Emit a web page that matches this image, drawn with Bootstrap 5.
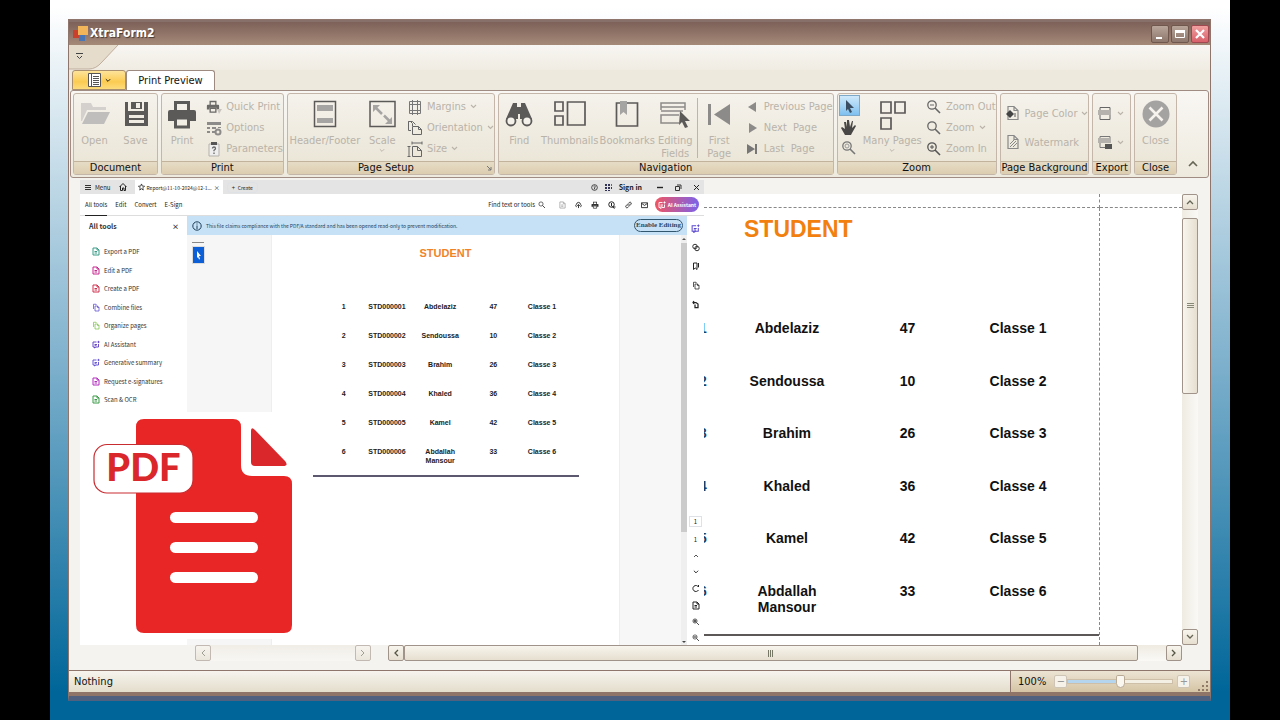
<!DOCTYPE html>
<html lang="en">
<head>
<meta charset="utf-8">
<meta name="viewport" content="width=device-width, initial-scale=1">
<title>XtraForm2</title>
<link href="https://cdn.jsdelivr.net/npm/bootstrap@5.3.0/dist/css/bootstrap.min.css" rel="stylesheet">
<style>
body{background:#000;font-family:"DejaVu Sans Condensed","DejaVu Sans",sans-serif;font-size:11px;line-height:13px;color:#111}
button{font:inherit;color:inherit;background:none;border:0;padding:0}
svg{display:block;flex:none}
a{color:inherit;text-decoration:none}
.desk{margin:0 50px;padding:19px 19px 19px 18px;background:linear-gradient(#fff 0,#fff 1%,#7fb1cd 50%,#069 96%)}
.win{border:1px solid #8e766d;border-bottom:5px solid #50607f;background:#f5f3f0}
.titlebar{height:25px;background:linear-gradient(#7d6259,#8d7065 40%,#a58a78);border-top:2px solid #88706a;color:#fff;font-size:12px;text-shadow:1px 1px 1px #4a3a34;padding:0 1px 0 3px}
.cap{width:18px;height:18px;border:1px solid #6f574e;border-radius:2px;background:linear-gradient(#b9a59a,#8d766b)}
.cap-close{background:linear-gradient(#f0a0a0,#d8606a);border-color:#a04850}
.quick{height:25px;background:linear-gradient(#f8f6f3,#f0ece2)}
.tabs-row{height:20px;background:#edeadd;padding:0 3px}
.app-tab{width:54px;border:1px solid #a98f6d;border-radius:3px 3px 0 0;background:linear-gradient(#fde49a,#fbcb52 60%,#fddc7c)}
.page-tab{width:89px;border:1px solid #9d8a80;border-bottom:0;border-radius:3px 3px 0 0;background:#fff}
.ribbon{border:1px solid #a08c82;border-radius:3px;margin:0 1px;padding:2px;background:linear-gradient(#f9f7f4,#eeeade);gap:3px}
.grp{border:1px solid #c4b6a8;border-radius:3px;background:linear-gradient(#f5f2ec,#e9e4d4)}
.grp-body{height:67px}
.grp-cap{height:12px;line-height:12px;background:linear-gradient(#e6dcc6,#dccdb0);border-top:1px solid #c2b39c;text-align:center;box-sizing:content-box;white-space:nowrap}
.big{padding-top:4px;color:#b9b3aa;text-align:center;line-height:13px;white-space:nowrap;display:flex;flex-direction:column;align-items:center}
.big svg.ic{width:32px;height:32px;margin-bottom:4px}
.stack{padding:2px 0 0 4px}
.tools{padding:1px 3px 0 1px}
.small-row{height:21px;display:flex;align-items:center;gap:4px;color:#b9b3aa;white-space:nowrap}
.small-row svg.ic{width:16px;height:16px}
.w41{width:41px}.w55{width:55px}.w60{width:60px}.w74{width:74px}
.g1{width:86px}.g2{width:123px}.g3{width:209px}.g4{width:336px}.g5{width:160px}.g6{width:91px}.g7{width:39px}.g8{width:43px}
.sepline{width:1px;height:60px;background:#c0b4a6;margin:4px 1px 0 1px}
.tool-on{width:21px;height:21px;background:linear-gradient(#cfe9fb,#7fc0ef);border:1px solid #7fa9c8}
.work{padding:16px 12px 0 11px}
.viewer{flex:624 1 0;min-width:0;margin-top:-14px;background:#fff;font-family:"Noto Sans CJK SC","Liberation Sans",sans-serif;font-size:6px;line-height:9px;color:#222;position:relative}
.tiny{font-size:5px}
.v-tabs{height:14px;background:#e4e4e4}
.v-tab{background:#fff;height:14px;padding:0 3px;gap:2px}
.v-bar{height:22px;padding:0 5px;border-bottom:1px solid #ddd}
.v-active{border-bottom:1px solid #222;line-height:20px;margin-top:1px}
.v-side{width:107px;padding:0 0 0 12px;color:#333}
.v-head{padding:6px 8px 11px 0;font-size:7px;margin-left:-3px}
.v-side li{height:19px;display:flex;align-items:center;gap:4px}
.v-side li:nth-child(even){height:18px}
.banner{height:19px;background:#c6e1f6;color:#1c3d57;padding:0 4px 0 5px}
.pill{border:1px solid #33566f;border-radius:8px;height:13px;width:49px;font-family:"Liberation Serif",serif;font-size:7px;font-weight:700;color:#2b4a63}
.ai{background:linear-gradient(90deg,#ef5562,#7b62ea);color:#fff;border-radius:8px;width:44px;height:15px;font-weight:700;font-size:5px;gap:2px}
.canvas-l{width:85px;background:#f6f6f6;border-right:1px solid #eee}
.canvas-r{width:62px;background:#f7f7f7;border-left:1px solid #eee}
.v-scroll{width:6px;background:#efefef}
.v-thumb{height:289px;background:#cbcbcb}
.rail{width:17px;padding:8px 0 3px}
.fixed-table{table-layout:fixed;width:100%;border-collapse:collapse;text-align:center;font-weight:700}
.fixed-table td{padding:0;vertical-align:top}
.mini{margin:42px auto 0;width:266px;border-bottom:2px solid #5c5870;font-family:"Liberation Sans",sans-serif;font-size:7px}
.mini td{white-space:nowrap}
.mini td:first-child{padding-left:9px}
.mini td:last-child{padding-right:9px}
.mini tr{height:29px}
.mini-title{font-family:"Liberation Sans",sans-serif;font-size:11px;line-height:14px;color:#f0832a;font-weight:700;margin-top:11px}
.logo-art{position:absolute;left:0;top:232px;background:#fff;width:222px}
.logo-word{font-family:Lato,"Liberation Sans",sans-serif;font-weight:900}
.preview{flex:478 1 0;min-width:0;background:#fff;overflow:hidden;font-family:"Liberation Sans",sans-serif;font-size:14px;line-height:16px;color:#111}
.strip{height:14px}
.dash-b{border-bottom:1px dashed #888}
.dash-r{border-right:1px dashed #888}
.margin-col{flex:none;width:82px}
.big-title{font-size:23px;line-height:25px;color:#f2800f;padding:9px 0 0 40px}
.report{margin-top:78px;border-bottom:2px solid #5c5858}
.report tr{height:53px}
.report tr:nth-child(even){height:52px}
.report td:first-child{color:#1d3d66;text-indent:-5px;text-align:left}
.vbar{width:16px;background:linear-gradient(90deg,#efebe2,#faf9f6)}
.sb{width:16px;height:16px;border:1px solid #a0948a;border-radius:2px;background:linear-gradient(#f8f5ee,#e6dfd0);display:flex;align-items:center;justify-content:center}
.vthumb{height:176px;border:1px solid #a0948a;border-radius:2px;background:linear-gradient(90deg,#f8f5ee,#e6dfd0)}
.hthumb{height:16px;border:1px solid #a0948a;border-radius:2px;background:linear-gradient(#f8f5ee,#e6dfd0)}
.htrack{background:linear-gradient(#efebe2,#faf9f6)}
.hs-off{width:176px;margin-left:126px;opacity:.6}
.hs-on{margin:0 28px 0 17px}
.hs-end{margin-left:28px}
.status{height:22px;margin-top:9px;border-top:1px solid #8e766d;background:linear-gradient(#f6f4ee,#e3ddcb);padding-left:5px}
.status-r{width:200px;border-left:1px solid #8e766d;background:linear-gradient(#ece4d4,#d5c4a4);padding-left:7px}
.frame-b{height:4px;background:#8f7468}
.zb{width:13px;height:13px;border:1px solid #cfc5b6;border-radius:2px;background:#f6f2ea;color:#999;line-height:10px}
.zoomer{appearance:none;-webkit-appearance:none;width:106px;height:15px;background:none;margin:0}
.zoomer::-webkit-slider-runnable-track{height:5px;border:1px solid #cdbfa8;background:linear-gradient(90deg,#b5d4ee 50%,#f4efe5 50%)}
.zoomer::-webkit-slider-thumb{-webkit-appearance:none;width:9px;height:13px;margin-top:-5px;background:#faf7f0;border:1px solid #b9aa95;border-radius:2px 2px 5px 5px}
</style>
</head>
<body>
<svg width="0" height="0" class="position-absolute">
<defs>
<symbol id="chev" viewBox="0 0 7 5"><path d="M1 1l2.5 2.5L6 1" fill="none" stroke="currentColor" stroke-width="1.1"/></symbol>
<symbol id="lens" viewBox="0 0 16 16"><circle cx="6" cy="6" r="4.2" fill="none" stroke="currentColor" stroke-width="1.3"/><path d="M9 9l5 5" stroke="currentColor" stroke-width="1.6"/></symbol>
<symbol id="printer" viewBox="0 0 32 32"><path d="M8 3h16v9h-3V6H11v6H8zM4 12h24q2 0 2 2v9h-6v-4H8v4H2v-9q0-2 2-2z" fill="currentColor"/><path d="M9.500 20h13v9h-13z" fill="none" stroke="currentColor" stroke-width="3"/></symbol>
<symbol id="doc" viewBox="0 0 16 16"><path d="M3 1.500h6l4 4v9H3zM9 1.500v4h4" fill="none" stroke="currentColor" stroke-width="1.2"/></symbol>
<symbol id="copy" viewBox="0 0 16 16"><path d="M6 5h5l3 3v7H6zM3 11V1.500h5l2 2M11 5v3h3" fill="none" stroke="currentColor" stroke-width="1.500"/></symbol>
<symbol id="tool" viewBox="0 0 16 16"><path d="M2 15V1h8l4 4v10zM10 1v4h4M5 8h5M5 11h5" fill="none" stroke="currentColor" stroke-width="2"/></symbol>
<symbol id="box" viewBox="0 0 16 16"><path d="M9 3H2v10h3v2l3-2h5V7M5 8h5M5 10.500h4" fill="none" stroke="currentColor" stroke-width="1.800"/><path d="M13 0l1 2 2 1-2 1-1 2-1-2-2-1 2-1z" fill="currentColor"/></symbol>
</defs>
</svg>
<div class="desk min-vh-100 d-flex flex-column">
<main class="win d-flex flex-column flex-grow-1">

<header class="titlebar d-flex align-items-center">
  <svg width="18" height="17" viewBox="0 0 18 17"><path d="M1 5h7v8H1z" fill="#c9402c"/><path d="M6 1h10v9H6z" fill="#f2b55a"/><path d="M7 10h6v6H7z" fill="#4a76b5"/></svg>
  <b class="flex-grow-1">XtraForm2</b>
  <div class="d-flex" style="gap:2px">
    <button class="cap" aria-label="Minimize"><svg width="16" height="16"><path d="M4 11h6v2H4z" fill="#fff"/></svg></button>
    <button class="cap" aria-label="Maximize"><svg width="16" height="16"><path d="M3.500 4.500h9v7h-9z" fill="none" stroke="#fff"/><path d="M3 4h10v3H3z" fill="#fff"/></svg></button>
    <button class="cap cap-close" aria-label="Close window"><svg width="16" height="16"><path d="M4 4l8 8M12 4l-8 8" stroke="#fff" stroke-width="2.200"/></svg></button>
  </div>
</header>

<div class="quick"><button aria-label="Customize toolbar"><svg width="52" height="25"><path d="M0 0h49L33 17Q27 24 20 24H0z" fill="#e6dccb"/><path d="M49 0L33 17Q27 24 20 24H0" fill="none" stroke="#bfae9e"/><path d="M7 8.500h7M8 11l2.500 2.500L13 11" fill="none" stroke="#444"/></svg></button></div>

<nav class="tabs-row d-flex">
  <button class="app-tab d-flex align-items-center justify-content-center gap-1" aria-label="File menu"><svg width="13" height="14"><path d="M.500.500h12v13H.500zM3.500 1v12" fill="#fff" stroke="#555"/><path d="M5 3.500h6M5 5.500h6M5 7.500h6M5 9.500h6M5 11.500h6" stroke="#555"/></svg><svg width="6" height="5"><use href="#chev"/></svg></button>
  <button class="page-tab">Print Preview</button>
</nav>

<section class="ribbon d-flex">
  <div class="grp g1"><div class="grp-body d-flex">
    <button class="big w41"><svg class="ic" viewBox="0 0 32 32"><path d="M2 5h10l2 4h13v3H8L3 23H2z" fill="#d3d0cd"/><path d="M9 14h22l-6 12H3z" fill="#c0bebd"/></svg>Open</button>
    <button class="big w41"><svg class="ic" viewBox="0 0 32 32"><path d="M5 4h3v9h16V4h4v24H5z" fill="#5c5a59"/><path d="M11 4h11v7H11z" fill="#5c5a59"/><path d="M16 5h4v5h-4z" fill="#f2efe8"/><path d="M9 17h15v3H9zM9 22h15v3H9z" fill="#f0ece4"/></svg>Save</button>
  </div><div class="grp-cap">Document</div></div>

  <div class="grp g2"><div class="grp-body d-flex">
    <button class="big w41"><svg class="ic" style="color:#5c5a59"><use href="#printer"/></svg>Print</button>
    <div class="stack">
      <button class="small-row"><svg class="ic" viewBox="0 0 16 16" style="color:#6b6967"><use href="#printer" width="14" height="15"/><path d="M11 10h5l-3 5z" fill="#c9c5be"/></svg>Quick Print</button>
      <button class="small-row"><svg class="ic" viewBox="0 0 16 16"><path d="M1 2h14v3H1zM1 7h3v2H1zM6 7h4v2H6zM1 11h3v2H1zM6 11h3v2H6zM12 7h3v1h-3z" fill="#8d8b89"/><circle cx="12" cy="12" r="2.500" fill="none" stroke="#8d8b89" stroke-width="2"/></svg>Options</button>
      <button class="small-row"><svg class="ic" viewBox="0 0 16 16"><path d="M3 3h10v12H3z" fill="#eee" stroke="#b5b1ac"/><path d="M5 1h6v3H5z" fill="#555"/><path d="M6.500 7.500q0-1.500 1.500-1.500t1.500 1.500q0 1-1.500 1.800v1M8 11.500v1.500" fill="none" stroke="#666" stroke-width="1.300"/></svg>Parameters</button>
    </div>
  </div><div class="grp-cap">Print</div></div>

  <div class="grp g3"><div class="grp-body d-flex">
    <button class="big w74"><svg class="ic" viewBox="0 0 32 32"><path d="M5.500 3.500h21v25h-21z" fill="none" stroke="#5c5a59" stroke-width="1.500"/><path d="M8 7h16v6H8zM8 20h16v5H8z" fill="#a6a4a2"/></svg>Header/Footer</button>
    <button class="big w41"><svg class="ic" viewBox="0 0 32 32"><path d="M4 3.500h25v25H4z" fill="none" stroke="#5c5a59" stroke-width="1.500"/><path d="M7 7h7l-7 7zM26 26h-7l7-7z" fill="#a6a4a2"/><path d="M9 9l7 7M18 17.500l6 6" stroke="#a6a4a2" stroke-width="2.500"/></svg>Scale<svg width="6" height="7" viewBox="0 0 7 5"><use href="#chev"/></svg></button>
    <div class="stack">
      <button class="small-row"><svg class="ic" viewBox="0 0 16 16"><path d="M2.500 2.500h11v12h-11zM5.500 1v15M10.500 1v15M2 5.500h12M2 11.500h12" fill="none" stroke="#777"/></svg>Margins<svg width="7" height="5"><use href="#chev"/></svg></button>
      <button class="small-row"><svg class="ic" viewBox="0 0 16 16"><path d="M5.500 6V3.500L3.500 1.500h-2v9H4M1.500 1.500h4l3 3M5.500 6.500h6l3 3v5h-9zM11.500 6.500v3h3" fill="none" stroke="#666"/></svg>Orientation<svg width="7" height="5"><use href="#chev"/></svg></button>
      <button class="small-row"><svg class="ic" viewBox="0 0 16 16"><path d="M5.500 5.500h5l4 4v6h-9zM10.500 5.500v4h4M5 2h10M5 .5v3M15 .5v3M2 5v11M.5 5.500h3M.5 15.500h3" fill="none" stroke="#666"/></svg>Size<svg width="7" height="5"><use href="#chev"/></svg></button>
    </div>
  </div><div class="grp-cap d-flex"><span class="flex-grow-1">Page Setup</span><svg width="10" height="12"><path d="M3 4l4 4M7 5v3H4" fill="none" stroke="#777"/></svg></div></div>

  <div class="grp g4"><div class="grp-body d-flex">
    <button class="big w41"><svg class="ic" viewBox="0 0 32 32"><path d="M10 5h4v4h4V5h4l7 16H17v-5h-2v5H3z" fill="#5c5a59"/><circle cx="8" cy="23" r="4.500" fill="#f4f1ea" stroke="#5c5a59" stroke-width="1.800"/><circle cx="24" cy="23" r="4.500" fill="#f4f1ea" stroke="#5c5a59" stroke-width="1.800"/></svg>Find</button>
    <button class="big w60"><svg class="ic" viewBox="0 0 32 32"><path d="M1 4h8v9H1zM1 18h8v9H1zM13.500 4H31v23H13.500z" fill="none" stroke="#5c5a59" stroke-width="1.700"/></svg>Thumbnails</button>
    <button class="big w55"><svg class="ic" viewBox="0 0 32 32"><path d="M5.500 5h21v23h-21z" fill="none" stroke="#5c5a59" stroke-width="1.700"/><path d="M9 3h7v14l-3.500-3L9 17z" fill="#a6a4a2"/></svg>Bookmarks</button>
    <button class="big w41"><svg class="ic" viewBox="0 0 32 32"><path d="M2 12V5h24v7M2 9h24M20 17H2v8h18M2 13h22" fill="none" stroke="#8d8b89" stroke-width="1.500"/><path d="M21 13l10 10h-5l3 6-3 1-3-6-3 3z" fill="#5c5a59"/></svg>Editing<br>Fields</button>
    <div class="sepline"></div>
    <button class="big w41"><svg class="ic" viewBox="0 0 32 32"><path d="M5 6h3v21H5zM27 6v21L11 16.500z" fill="#8d8b89"/></svg>First<br>Page</button>
    <div class="stack">
      <button class="small-row"><svg class="ic" viewBox="0 0 16 16"><path d="M12 3v10L4 8z" fill="#8d8b89"/></svg>Previous Page</button>
      <button class="small-row"><svg class="ic" viewBox="0 0 16 16"><path d="M5 3v10l8-5z" fill="#8d8b89"/></svg>Next&nbsp; Page</button>
      <button class="small-row"><svg class="ic" viewBox="0 0 16 16"><path d="M3 3v10l8-5zM11 3h2v10h-2z" fill="#777"/></svg>Last&nbsp; Page</button>
    </div>
  </div><div class="grp-cap">Navigation</div></div>

  <div class="grp g5"><div class="grp-body d-flex">
    <div class="tools">
      <button class="tool-on d-flex align-items-center justify-content-center" aria-label="Pointer"><svg width="16" height="16"><path d="M5 2l8 8H9l2 4-2 1-2-4-2 2z" fill="#3b4d60"/></svg></button>
      <button class="small-row" aria-label="Hand tool"><svg width="20" height="16" viewBox="0 0 20 16"><path d="M6 16L2 9l1-1 3 2-1-7h2l1 5V1h2l1 7 2-6h1l-1 7 3-3 1 1-4 7-1 2z" fill="#4a4846"/></svg></button>
      <button class="small-row" aria-label="Magnifier"><svg width="20" height="16" viewBox="-2 0 20 16" style="color:#777"><use href="#lens" width="16" height="16"/><circle cx="6" cy="6" r="2" fill="none" stroke="#999"/></svg></button>
    </div>
    <button class="big w60"><svg class="ic" viewBox="0 0 32 32"><path d="M5 4h10v11H5zM19 4h10v11H19zM5 20h10v11H5z" fill="none" stroke="#5c5a59" stroke-width="1.700"/></svg>Many Pages<svg width="6" height="7" viewBox="0 0 7 5"><use href="#chev"/></svg></button>
    <div class="stack">
      <button class="small-row"><svg class="ic" viewBox="0 0 16 16" style="color:#666"><use href="#lens"/><path d="M4 6h4" stroke="#666"/></svg>Zoom Out</button>
      <button class="small-row"><svg class="ic" style="color:#666"><use href="#lens"/></svg>Zoom<svg width="7" height="5"><use href="#chev"/></svg></button>
      <button class="small-row"><svg class="ic" viewBox="0 0 16 16" style="color:#555"><use href="#lens"/><path d="M4 6h4M6 4v4" stroke="#555"/></svg>Zoom In</button>
    </div>
  </div><div class="grp-cap">Zoom</div></div>

  <div class="grp g6"><div class="grp-body d-flex flex-column justify-content-center ps-1" style="gap:8px">
    <button class="small-row"><svg class="ic" viewBox="0 0 16 16" style="color:#888"><use href="#doc"/><path d="M5 5l4 4-4 4-4-4z" fill="#444"/><path d="M10 8v4" stroke="#555"/></svg>Page Color<svg width="7" height="5"><use href="#chev"/></svg></button>
    <button class="small-row"><svg class="ic" viewBox="0 0 16 16" style="color:#888"><use href="#doc"/><path d="M5 10l4-4M5 13l6-6M8 13l4-4" stroke="#888"/></svg>Watermark</button>
  </div><div class="grp-cap">Page Background</div></div>

  <div class="grp g7"><div class="grp-body d-flex flex-column justify-content-center ps-1" style="gap:8px">
    <button class="small-row" aria-label="Export to"><svg class="ic" viewBox="0 0 16 16"><path d="M3 6V2.500h10V6M3 9v5.500h10V9" fill="none" stroke="#666"/><path d="M1 5h13v5H1z" fill="#b5b2ae"/></svg><svg width="7" height="5"><use href="#chev"/></svg></button>
    <button class="small-row" aria-label="Send by e-mail"><svg class="ic" viewBox="0 0 16 16"><path d="M3 5V2.500h10V5M3 9v4.500h5" fill="none" stroke="#777"/><path d="M1 4h13v5H1z" fill="#b5b2ae"/><path d="M8 10h7v5H8z" fill="#555"/></svg><svg width="7" height="5"><use href="#chev"/></svg></button>
  </div><div class="grp-cap">Export</div></div>

  <div class="grp g8"><div class="grp-body d-flex">
    <button class="big w41"><svg class="ic" viewBox="0 0 32 32"><circle cx="16" cy="16" r="13.500" fill="#a5a3a2"/><path d="M9.500 9.500l13 13M22.500 9.500l-13 13" stroke="#f6f3ee" stroke-width="2.600"/></svg>Close</button>
  </div><div class="grp-cap">Close</div></div>
  <button class="ms-auto align-self-end p-2" aria-label="Collapse ribbon"><svg width="10" height="7"><path d="M1 6l4-4 4 4" fill="none" stroke="#665" stroke-width="1.600"/></svg></button>
</section>

<section class="work d-flex flex-grow-1">
  <article class="viewer d-flex flex-column">
    <div class="v-tabs d-flex align-items-center">
      <button class="d-flex align-items-center ps-1" style="gap:3px"><svg width="8" height="7"><path d="M1 1.500h6M1 3.500h6M1 5.500h6" stroke="#333"/></svg>Menu</button>
      <button class="px-2" aria-label="Home"><svg width="8" height="8" viewBox="0 0 16 16"><path d="M1 8l7-7 7 7M3 6v9h4v-5h3v5h3V6" fill="none" stroke="#222" stroke-width="2"/></svg></button>
      <div class="v-tab d-flex align-items-center"><svg width="7" height="8" viewBox="0 0 16 16"><path d="M8 1l2 5h5l-4 4 1 5-4-3-4 3 1-5-4-4h5z" fill="none" stroke="#222" stroke-width="1.800"/></svg><span class="tiny text-nowrap">Report@11-10-2024@12-1...</span><span>×</span></div>
      <button class="border rounded-1 px-1 ms-1">+&nbsp; <span class="tiny">Create</span></button>
      <div class="ms-auto d-flex align-items-center" style="gap:7px">
        <svg width="7" height="7" viewBox="0 0 16 16"><circle cx="8" cy="8" r="6.500" fill="none" stroke="#333" stroke-width="2"/><path d="M6 6q2-3 4 0l-2 3v3" fill="none" stroke="#333" stroke-width="2"/></svg>
        <svg width="7" height="7"><path d="M0 0h2v2H0zM3 0h2v2H3zM0 3h2v2H0zM3 3h2v2H3zM0 6h2v1H0zM3 6h2v1H3zM6 3h1v2H6z" fill="#335"/><path d="M6 0h1v2H6z" fill="#55f"/></svg>
        <b style="font-size:7px">Sign in</b>
        <svg class="ms-2" width="7" height="7"><path d="M0 3.500h6" stroke="#222" stroke-width="1.400"/></svg>
        <svg class="ms-1" width="7" height="7"><path d="M.5 2.500h4v4h-4zM2 1h4v4" fill="none" stroke="#333"/></svg>
        <svg class="ms-1 me-1" width="7" height="7"><path d="M1 1l5 5M6 1L1 6" stroke="#222"/></svg>
      </div>
    </div>
    <div class="v-bar d-flex align-items-center">
      <a href="#" class="v-active">All tools</a><a href="#" class="ms-2">Edit</a><a href="#" class="ms-2">Convert</a><a href="#" class="ms-2">E-Sign</a>
      <div class="ms-auto d-flex align-items-center" style="gap:7px">
        <div class="d-flex align-items-center" style="gap:9px">
        <span class="d-flex align-items-center me-1" style="gap:3px">Find text or tools <svg width="8" height="8"><use href="#lens"/></svg></span>
        <svg width="7" height="8" style="color:#aaa"><use href="#tool"/></svg>
        <svg width="7" height="8" viewBox="0 0 16 16"><path d="M4 12H3q-3-2 0-5 1-5 5-5t5 5q3 3 0 5h-1M8 15V7M5 10l3-3 3 3" fill="none" stroke="#222" stroke-width="2"/></svg>
        <svg width="8" height="8" style="color:#333"><use href="#printer"/></svg>
        <svg width="8" height="8" viewBox="0 0 16 16"><circle cx="7" cy="7" r="5.500" fill="none" stroke="#222" stroke-width="2"/><path d="M7 4v6l6 5M10 12h5" fill="none" stroke="#222" stroke-width="2"/></svg>
        <svg width="7" height="8" viewBox="0 0 16 16"><path d="M6 10l5-5M7 5l3-3q3-1 4 1t-1 4l-3 3M9 11l-3 3q-3 1-4-1t1-4l3-3" fill="none" stroke="#222" stroke-width="2"/></svg>
        <svg width="7" height="8" viewBox="0 0 16 16"><path d="M1 3h14v11H1zM1 4l7 5 7-5" fill="none" stroke="#222" stroke-width="2"/></svg>
        </div>
        <button class="ai d-flex align-items-center justify-content-center text-nowrap"><svg width="8" height="8"><use href="#box"/></svg>AI Assistant</button>
      </div>
    </div>
    <div class="d-flex flex-grow-1">
      <aside class="v-side">
        <div class="v-head d-flex justify-content-between"><b>All tools</b><b>×</b></div>
        <ul class="list-unstyled m-0">
          <li><svg width="8" height="9" style="color:#3a9c86"><use href="#tool"/></svg>Export a PDF</li>
          <li><svg width="8" height="9" style="color:#c8258f"><use href="#tool"/></svg>Edit a PDF</li>
          <li><svg width="8" height="9" style="color:#d0314d"><use href="#tool"/></svg>Create a PDF</li>
          <li><svg width="8" height="9" style="color:#5b48d0"><use href="#copy"/></svg>Combine files</li>
          <li><svg width="8" height="9" style="color:#7cc34a"><use href="#copy"/></svg>Organize pages</li>
          <li><svg width="8" height="9" style="color:#5a35c4"><use href="#box"/></svg>AI Assistant</li>
          <li><svg width="8" height="9" style="color:#5a48d0"><use href="#box"/></svg>Generative summary</li>
          <li><svg width="8" height="9" style="color:#b52cc0"><use href="#tool"/></svg>Request e-signatures</li>
          <li><svg width="8" height="9" style="color:#3a9c46"><use href="#tool"/></svg>Scan &amp; OCR</li>
        </ul>
      </aside>
      <div class="flex-grow-1 d-flex flex-column">
        <div class="banner d-flex align-items-center"><svg width="10" height="10"><circle cx="5" cy="5" r="4.200" fill="none" stroke="#1c3d57"/><path d="M5 2.500v1M5 4.500v3.500" stroke="#1c3d57"/></svg><span class="tiny ps-1 flex-grow-1 text-nowrap">This file claims compliance with the PDF/A standard and has been opened read-only to prevent modification.</span><button class="pill lh-1">Enable Editing</button></div>
        <div class="d-flex flex-grow-1">
          <div class="canvas-l ps-1 pt-1"><svg width="16" height="26"><path d="M1 3.500h12" stroke="#888"/><path d="M1 7h13v18H1z" fill="#dcdcdc"/><path d="M2 8h11v16H2z" fill="#0d5fd8"/><path d="M6 12l4 5H8l1 3-1 .5L7 18l-1 1z" fill="#fff"/></svg></div>
          <div class="flex-grow-1 text-center">
            <div class="mini-title">STUDENT</div>
            <table class="fixed-table mini">
              <colgroup><col style="width:20%"><col style="width:16%"><col style="width:24%"><col style="width:16%"><col style="width:24%"></colgroup>
              <tbody>
              <tr><td>1</td><td>STD000001</td><td>Abdelaziz</td><td>47</td><td>Classe 1</td></tr>
              <tr><td>2</td><td>STD000002</td><td>Sendoussa</td><td>10</td><td>Classe 2</td></tr>
              <tr><td>3</td><td>STD000003</td><td>Brahim</td><td>26</td><td>Classe 3</td></tr>
              <tr><td>4</td><td>STD000004</td><td>Khaled</td><td>36</td><td>Classe 4</td></tr>
              <tr><td>5</td><td>STD000005</td><td>Kamel</td><td>42</td><td>Classe 5</td></tr>
              <tr><td>6</td><td>STD000006</td><td>Abdallah<br>Mansour</td><td>33</td><td>Classe 6</td></tr>
              </tbody>
            </table>
          </div>
          <div class="canvas-r"></div>
          <div class="v-scroll d-flex flex-column"><svg width="6" height="8"><path d="M1 5l2-2 2 2z" fill="#555"/></svg><div class="v-thumb"></div><svg class="mt-auto" width="6" height="6"><path d="M1 2l2 2 2-2z" fill="#444"/></svg></div>
        </div>
      </div>
      <div class="rail d-flex flex-column justify-content-between">
        <div class="d-flex flex-column align-items-center" style="gap:10px">
          <svg width="9" height="9" style="color:#5a48d0"><use href="#box"/></svg>
          <svg width="8" height="9" viewBox="0 0 16 16"><circle cx="6" cy="6" r="4.500" fill="none" stroke="#333" stroke-width="2"/><circle cx="10" cy="10" r="4.500" fill="none" stroke="#333" stroke-width="2"/></svg>
          <svg width="8" height="9" viewBox="0 0 16 16"><path d="M3 1h7v13l-3.500-3L3 14zM13 1v9" fill="none" stroke="#222" stroke-width="2"/></svg>
          <svg width="8" height="9"><use href="#copy"/></svg>
          <svg width="8" height="9" viewBox="0 0 16 16"><path d="M2 4h6l4 3v7H6V8M4 1L2 4l2 3" fill="none" stroke="#222" stroke-width="2.500"/></svg>
        </div>
        <div class="d-flex flex-column align-items-center" style="gap:8px">
          <span class="border px-1">1</span><span>1</span>
          <svg width="6" height="8"><path d="M1 5l2-2 2 2" fill="none" stroke="#555"/></svg>
          <svg width="6" height="8"><use href="#chev"/></svg>
          <svg width="8" height="9" viewBox="0 0 16 16"><path d="M13 11A6 6 0 1 1 13 5V1" fill="none" stroke="#222" stroke-width="2"/></svg>
          <svg width="8" height="9"><use href="#tool"/></svg>
          <svg width="8" height="8" viewBox="0 0 16 16"><use href="#lens"/><path d="M3 6h6M6 3v6" stroke="#222" stroke-width="2"/></svg>
          <svg width="8" height="8" viewBox="0 0 16 16"><use href="#lens"/><path d="M3 6h6" stroke="#222" stroke-width="2"/></svg>
        </div>
      </div>
    </div>
    <svg class="logo-art" width="222" height="227" viewBox="80 412 222 227"><path d="M144 419h89q8 0 8 8v38q0 11 11 11h32q8 0 8 8v141q0 8-8 8H144q-8 0-8-8V427q0-8 8-8z" fill="#e82626"/><path d="M251 431q0-5 4-1l30 31q4 5-2 5h-28q-4 0-4-4z" fill="#d9272b"/><rect x="94" y="444.500" width="99" height="48.500" rx="13" fill="#fff" stroke="#c92c30" stroke-width="1.200"/><g fill="#fff"><rect x="170" y="512" width="88" height="11" rx="5.500"/><rect x="170" y="542" width="88" height="11" rx="5.500"/><rect x="170" y="572" width="88" height="11" rx="5.500"/></g><text x="143.500" y="481" font-size="38" text-anchor="middle" fill="#d9272b" class="logo-word">PDF</text></svg>
  </article>

  <article class="preview d-flex flex-column">
    <div class="strip d-flex"><div class="dash-b dash-r flex-grow-1"></div><div class="dash-b margin-col"></div></div>
    <div class="d-flex flex-grow-1">
      <div class="dash-r flex-grow-1">
        <div class="big-title fw-bold">STUDENT</div>
        <table class="fixed-table report">
          <colgroup><col style="width:4%"><col style="width:34%"><col style="width:27%"><col style="width:29%"><col style="width:6%"></colgroup>
          <tbody>
          <tr><td>1</td><td>Abdelaziz</td><td>47</td><td>Classe 1</td><td></td></tr>
          <tr><td>2</td><td>Sendoussa</td><td>10</td><td>Classe 2</td><td></td></tr>
          <tr><td>3</td><td>Brahim</td><td>26</td><td>Classe 3</td><td></td></tr>
          <tr><td>4</td><td>Khaled</td><td>36</td><td>Classe 4</td><td></td></tr>
          <tr><td>5</td><td>Kamel</td><td>42</td><td>Classe 5</td><td></td></tr>
          <tr><td>6</td><td>Abdallah<br>Mansour</td><td>33</td><td>Classe 6</td><td></td></tr>
          </tbody>
        </table>
      </div>
      <div class="margin-col"></div>
    </div>
  </article>
  <div class="vbar d-flex flex-column">
    <button class="sb" aria-label="Scroll up"><svg width="8" height="6"><path d="M1 5l3-3 3 3" fill="none" stroke="#665" stroke-width="1.300"/></svg></button>
    <div class="vthumb mt-2 d-flex align-items-center justify-content-center"><svg width="7" height="6"><path d="M0 .5h7M0 2.500h7M0 4.500h7" stroke="#887"/></svg></div>
    <button class="sb mt-auto" aria-label="Scroll down"><svg width="8" height="6"><path d="M1 1l3 3 3-3" fill="none" stroke="#665" stroke-width="1.300"/></svg></button>
  </div>
</section>

<div class="d-flex">
  <div class="d-flex justify-content-between htrack hs-off"><button class="sb" aria-label="Scroll pane left"><svg width="6" height="8"><path d="M5 1L2 4l3 3" fill="none" stroke="#665"/></svg></button><button class="sb" aria-label="Scroll pane right"><svg width="6" height="8"><path d="M1 1l3 3-3 3" fill="none" stroke="#665"/></svg></button></div>
  <div class="d-flex htrack flex-grow-1 hs-on"><button class="sb" aria-label="Scroll left"><svg width="6" height="8"><path d="M5 1L2 4l3 3" fill="none" stroke="#554" stroke-width="1.300"/></svg></button><div class="hthumb flex-grow-1 d-flex align-items-center justify-content-center"><svg width="6" height="7"><path d="M.5 0v7M2.500 0v7M4.500 0v7" stroke="#776"/></svg></div><button class="sb hs-end" aria-label="Scroll right"><svg width="6" height="8"><path d="M1 1l3 3-3 3" fill="none" stroke="#554" stroke-width="1.300"/></svg></button></div>
</div>

<footer>
  <div class="status d-flex"><span class="flex-grow-1 align-self-center">Nothing</span>
    <div class="status-r d-flex align-items-center">
      <label for="zoom" class="pe-2">100%</label>
      <button class="zb" aria-label="Zoom out">−</button>
      <input class="zoomer" id="zoom" type="range" min="0" max="100" value="50">
      <button class="zb ms-1" aria-label="Zoom in">+</button>
      <svg class="ms-2 align-self-end" width="11" height="13"><path d="M8 2h2v2H8zM8 6h2v2H8zM8 10h2v2H8zM4 6h2v2H4zM4 10h2v2H4zM0 10h2v2H0z" fill="#8f7b68"/></svg>
    </div>
  </div>
  <div class="frame-b"></div>
</footer>
</main>
</div>
<script src="https://cdn.jsdelivr.net/npm/bootstrap@5.3.0/dist/js/bootstrap.bundle.min.js"></script>
</body>
</html>
